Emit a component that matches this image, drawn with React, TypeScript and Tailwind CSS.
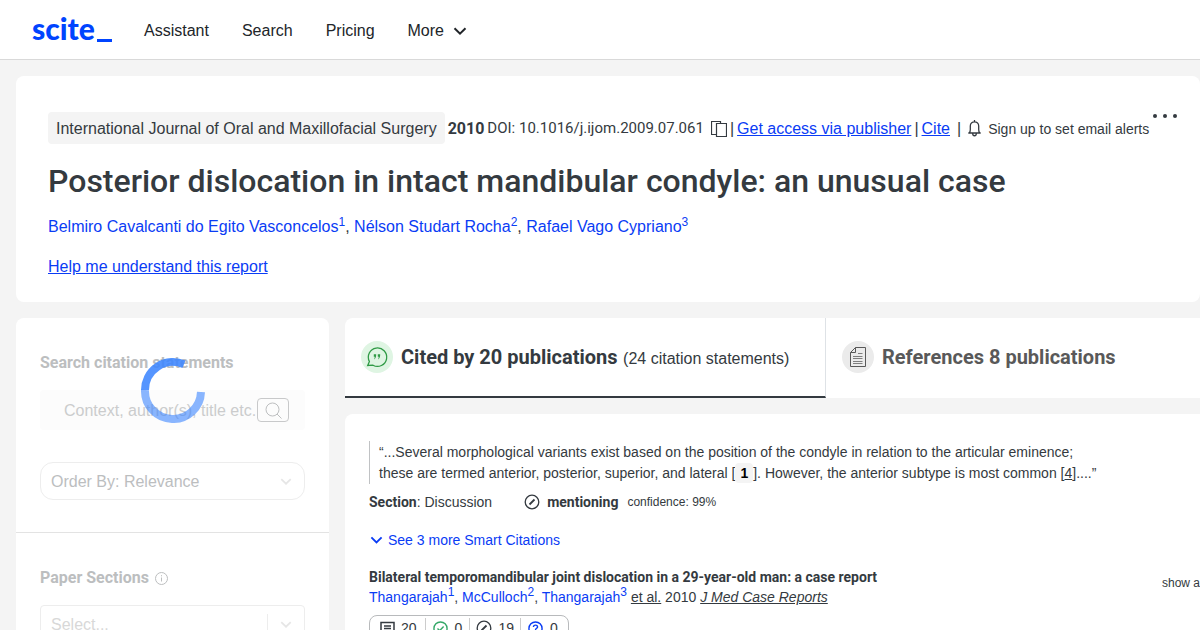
import React from "react";

const link = "text-[#0a3cf5]";
const strong = "font-['Roboto','Liberation_Sans',sans-serif] font-bold";

function Chevron({ className, w = 2 }: { className?: string; w?: number }) {
  return (
    <svg viewBox="0 0 14 8" fill="none" stroke="currentColor" strokeWidth={w} className={className} aria-hidden="true">
      <path d="M1.5 1.2 7 6.6l5.5-5.4" />
    </svg>
  );
}

function Header() {
  return (
    <header className="flex h-[60px] items-center border-b border-[#d9d9d9] bg-white px-8">
      <a href="#" aria-label="scite_" className="mr-8 flex w-20 items-end justify-between font-['Lato','Liberation_Sans',sans-serif] text-[30px] font-black leading-8 text-[#0044ff]">
        <span className="-mt-1">scite</span>
        <span className="mb-0.5 h-[3px] w-[15px] bg-[#0044ff]" />
      </a>
      <nav className="flex items-center gap-[33px] pt-[3px] text-base text-[#212529]">
        <a href="#">Assistant</a>
        <a href="#">Search</a>
        <a href="#">Pricing</a>
        <button type="button" className="flex items-center gap-[9px]">
          More
          <Chevron className="h-2 w-[14px]" />
        </button>
      </nav>
    </header>
  );
}

function PaperCard() {
  return (
    <section className="h-[226px] rounded-lg bg-white px-8 pt-9">
      <div className="flex items-start gap-1">
        <div className="flex items-center gap-[3px] whitespace-nowrap">
          <span className="rounded bg-[#f4f4f4] px-2 pb-[3px] pt-[5px]">International Journal of Oral and Maxillofacial Surgery</span>
          <div className="flex items-center gap-[3px] pt-px">
            <b className={strong}>2010</b>
            <span className="font-['Roboto','Liberation_Sans',sans-serif] text-[15px]">DOI: 10.1016/j.ijom.2009.07.061</span>
            <button type="button" aria-label="Copy DOI" className="ml-1">
              <svg width="16" height="16" viewBox="0 0 16 16" fill="none" stroke="currentColor" aria-hidden="true">
                <path d="M5.500 13.500H.5V.5h9v2M5.500 2.500h10v13h-10z" strokeWidth="1.200" />
              </svg>
            </button>
            <span>|</span>
            <a href="#" className={`${link} underline`}>Get access via publisher</a>
            <span>|</span>
            <a href="#" className={`${link} underline`}>Cite</a>
            <span className="mx-1">|</span>
            <button type="button" className="flex items-center gap-[7px] text-sm">
              <svg width="13" height="17" viewBox="0 0 13 17" fill="none" stroke="currentColor" strokeWidth="1.300" aria-hidden="true">
                <path d="M6.500 0v1.800M.3 13h12.400M1.300 12.800c1-.8 1-2 1-3.300V6a4.200 4.200 0 0 1 8.400 0v3.500c0 1.300 0 2.500 1 3.300M4.700 13.500c0 3 3.600 3 3.600 0" />
              </svg>
              Sign up to set email alerts
            </button>
          </div>
        </div>
        <button type="button" aria-label="More actions">
          <svg width="24" height="8" viewBox="0 0 24 8" fill="currentColor" aria-hidden="true">
            <circle cx="2" cy="4" r="2" /><circle cx="12" cy="4" r="2" /><circle cx="22" cy="4" r="2" />
          </svg>
        </button>
      </div>
      <h1 className="mt-4 whitespace-nowrap font-['Roboto','Liberation_Sans',sans-serif] text-[32px] font-medium leading-[42px]">Posterior dislocation in intact mandibular condyle: an unusual case</h1>
      <p className="mt-[13px]">
        <Author name="Belmiro Cavalcanti do Egito Vasconcelos" n="1" />,{" "}
        <Author name="Nélson Studart Rocha" n="2" />,{" "}
        <Author name="Rafael Vago Cypriano" n="3" />
      </p>
      <a href="#" className={`${link} mt-4 inline-block underline`}>Help me understand this report</a>
    </section>
  );
}

function Author({ name, n }: { name: string; n: string }) {
  return (
    <a href="#" className={link}>
      {name}
      <sup className="text-xs">{n}</sup>
    </a>
  );
}

function Sidebar() {
  return (
    <aside className="relative w-[313px] shrink-0 rounded-t-lg bg-white">
      <div className="flex h-[215px] flex-col border-b border-[#e3e3e3] px-6 pt-[33px]">
        <label htmlFor="q" className={`${strong} text-[#bcbebf]`}>Search citation statements</label>
        <div className="mt-[15px] flex h-10 items-center rounded bg-[#fcfcfc] pl-6 pr-4">
          <input id="q" placeholder="Context, author(s), title etc." className="w-[193px] min-w-0 bg-transparent pt-0.5 placeholder:text-[#cbcccd]" />
          <button type="button" aria-label="Search" className="flex h-6 w-8 shrink-0 items-center justify-center rounded-sm border border-[#c8c9ca] text-[#bdbfc0]">
            <svg width="17" height="17" viewBox="0 0 17 17" fill="none" stroke="currentColor" aria-hidden="true">
              <circle cx="7.500" cy="7.500" r="6.500" /><path d="m12 12 4.500 4.500" />
            </svg>
          </button>
        </div>
        <div className="mt-8 flex h-[38px] items-center rounded-[13px] border border-[#ededed] px-[10px] text-[#bcbebf]">
          <select aria-label="Order" className="w-full appearance-none bg-transparent pt-0.5">
            <option>Order By: Relevance</option>
          </select>
          <Chevron className="mr-0.5 h-[7px] w-3 shrink-0 text-[#e6e6e6]" />
        </div>
      </div>
      <div className="px-6 pt-[33px]">
        <div className="flex items-center gap-[6px]">
          <label htmlFor="sections" className={`${strong} text-[#bcbebf]`}>Paper Sections</label>
          <svg width="13" height="13" viewBox="0 0 13 13" fill="none" stroke="#bcbebf" aria-hidden="true">
            <circle cx="6.500" cy="6.500" r="6" /><path d="M6.500 5.500v4M6.500 3.200v1.100" />
          </svg>
        </div>
        <div className="mt-[15px] flex h-[38px] items-center rounded border border-[#ededed] px-[10px] text-[#d8d8d8]">
          <select id="sections" className="w-full appearance-none bg-transparent pt-0.5">
            <option>Select...</option>
          </select>
          <span className="mr-3 h-[21px] w-px shrink-0 bg-[#ededed]" />
          <Chevron className="mr-0.5 h-[7px] w-3 shrink-0 text-[#e6e6e6]" />
        </div>
      </div>
      <svg className="absolute left-[124px] top-[39px]" width="66" height="66" viewBox="0 0 66 66" fill="none" strokeWidth="8" role="img" aria-label="Loading">
        <path d="M5 33A28 28 0 0 1 44 7.300" stroke="#3c85ff" strokeOpacity="0.870" />
        <path d="M5 33A28 28 0 0 0 61 35" stroke="#3c85ff" strokeOpacity="0.600" />
      </svg>
    </aside>
  );
}

function Tabs() {
  return (
    <div role="tablist" className="flex h-20 text-xl">
      <button type="button" role="tab" aria-selected="true" className="flex w-[481px] items-center gap-2 rounded-tl-lg border-b-2 border-r border-b-[#343a40] border-r-[#dee2e6] bg-white px-4 text-left">
        <svg width="32" height="32" viewBox="0 0 32 32" fill="none" aria-hidden="true">
          <circle cx="16" cy="16" r="16" fill="#dff5e3" />
          <path d="M6.700 24.500 8.400 20.500A9.200 9.200 0 1 1 12 24.200Z" stroke="#2f9a45" strokeWidth="1.300" />
          <path d="M12.800 13.200h2.400c0 2.500-.5 4-2 5.300l.6-2.800h-1zM16.800 13.200h2.400c0 2.500-.5 4-2 5.300l.6-2.800h-1z" fill="#2f9a45" />
        </svg>
        <span><b className={strong}>Cited by 20 publications</b> <span className="text-base">(24 citation statements)</span></span>
      </button>
      <button type="button" role="tab" aria-selected="false" className="flex flex-1 items-center gap-2 border-b-2 border-white bg-white px-4 text-left text-[#595959]">
        <svg width="32" height="32" viewBox="0 0 32 32" fill="none" stroke="#595959" aria-hidden="true">
          <circle cx="16" cy="16" r="16" fill="#ebebeb" stroke="none" />
          <path d="M8.500 11.500 13.500 6.500h10v19h-15zM13.500 6.500v5h-5" />
          <path d="M16 12.500h4.500M11 15.500h9.500M11 17.500h9.500M11 20.500h9.500M11 22.500h9.500" strokeOpacity="0.750" />
        </svg>
        <b className={strong}>References 8 publications</b>
      </button>
    </div>
  );
}

function Mention({ className }: { className?: string }) {
  return (
    <svg viewBox="0 0 16 16" fill="none" stroke="currentColor" className={className} aria-hidden="true">
      <circle cx="8" cy="8" r="6.800" strokeWidth="1.300" /><path d="m5.500 10.500 5-5" strokeWidth="1.800" />
    </svg>
  );
}

function Tally() {
  return (
    <div className="mt-2 flex h-[26px] w-[200px] items-center rounded-lg border border-[#b8babc] pl-[10px]">
      <span className="flex items-center gap-[6px] border-r border-[#ccc] pr-2">
        <svg width="15" height="15" viewBox="0 0 15 15" fill="none" stroke="currentColor" strokeWidth="1.500" aria-hidden="true">
          <path d="M1 1.500h13v12H1zM4 5h7M4 7.500h7M4 10h5" />
        </svg>
        20
      </span>
      <span className="flex items-center gap-[7px] border-r border-[#ccc] px-[7px]">
        <svg width="15" height="15" viewBox="0 0 16 16" fill="none" stroke="#35a868" strokeWidth="1.500" aria-hidden="true">
          <circle cx="8" cy="8" r="7" /><path d="m4.800 8 2.300 2.300 4.200-4.500" />
        </svg>
        0
      </span>
      <span className="flex items-center gap-[6px] border-r border-[#ccc] px-[6px]">
        <Mention className="size-4" />
        19
      </span>
      <span className="flex items-center gap-[7px] pl-[7px]">
        <svg width="15" height="15" viewBox="0 0 16 16" fill="none" stroke="#0a3cf5" strokeWidth="1.500" aria-hidden="true">
          <circle cx="8" cy="8" r="7" /><path d="M5.800 6.500c0-3 4.400-2.700 4.400 0 0 1.300-2.200 1.300-2.200 3M8 10.800v1.500" />
        </svg>
        0
      </span>
    </div>
  );
}

function Citation() {
  return (
    <article className="mt-4 rounded-tl-lg bg-white px-6 pt-[27px] text-sm">
      <blockquote className="border-l border-[#c0c2c4] pl-[9px] pt-px leading-[21px]">
        “...Several morphological variants exist based on the position of the condyle in relation to the articular eminence;
        <br />
        these are termed anterior, posterior, superior, and lateral [<b className="rounded bg-[#f4f4f4] px-[5px] py-0.5 text-black">1</b>]. However, the anterior subtype is most common [<u>4</u>]....”
      </blockquote>
      <div className="mt-2 flex items-center">
        <span><b className={strong}>Section</b>: Discussion</span>
        <Mention className="ml-8 mr-[7px] size-4" />
        <b className={strong}>mentioning</b>
        <span className="ml-[9px] text-xs">confidence: 99%</span>
      </div>
      <button type="button" className={`${link} mt-[18px] flex items-center gap-[5px] pl-[1px]`}>
        <Chevron className="h-2 w-[13px]" />
        See 3 more Smart Citations
      </button>
      <div className="mt-[17px] flex justify-between">
        <div>
          <b className={`${strong} block`}>Bilateral temporomandibular joint dislocation in a 29-year-old man: a case report</b>
          <p>
            <Author name="Thangarajah" n="1" />, <Author name="McCulloch" n="2" />, <Author name="Thangarajah" n="3" />{" "}
            <u>et al.</u> 2010 <a href="#" className="italic underline">J Med Case Reports</a>
          </p>
          <Tally />
        </div>
        <button type="button" className="mt-2 h-4 w-[120px] text-left text-xs">show all</button>
      </div>
    </article>
  );
}

export default function App() {
  return (
    <div className="h-screen overflow-hidden bg-[#f4f4f4] font-['Liberation_Sans',sans-serif] text-base text-[#343a40]">
      <Header />
      <main className="pl-4 pt-4">
        <PaperCard />
        <div className="mt-4 flex items-stretch gap-4">
          <Sidebar />
          <div className="min-w-[961px] flex-1">
            <Tabs />
            <Citation />
          </div>
        </div>
      </main>
    </div>
  );
}
